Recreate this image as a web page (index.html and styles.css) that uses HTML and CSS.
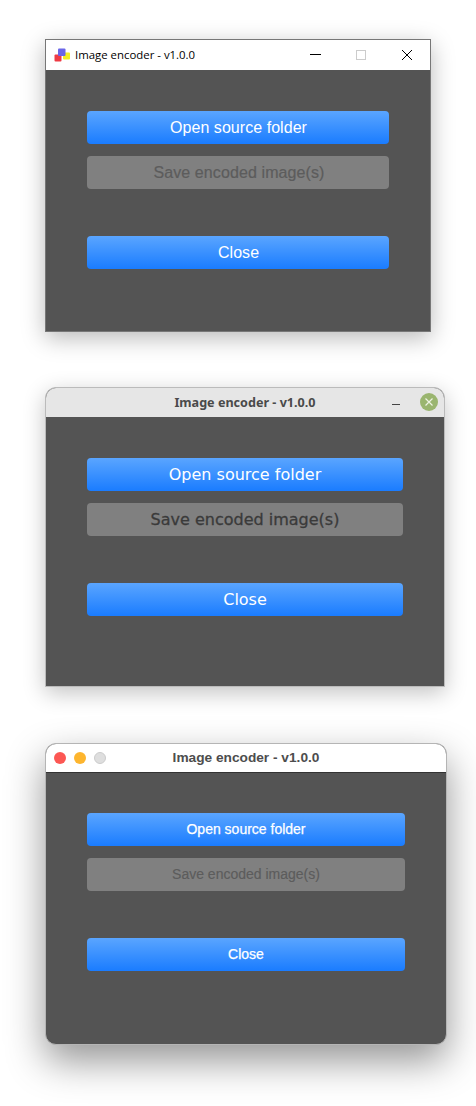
FILE: index.html
```html
<!DOCTYPE html>
<html lang="en">
<head>
  <meta charset="UTF-8">
  <title>Image encoder</title>
  <link rel="stylesheet" href="styles.css">
</head>
<body>

<div class="window win">
  <div class="titlebar">
    <svg class="app-icon" width="16" height="14" viewBox="0 0 16 14">
      <rect x="0.5" y="6.5" width="7" height="7" rx="1" fill="#ee3a44"/>
      <rect x="9" y="4.5" width="7" height="7" rx="1" fill="#f2ee22"/>
      <rect x="4" y="0.5" width="7.5" height="7.5" rx="1" fill="#6a66e8"/>
    </svg>
    <div class="title">Image encoder - v1.0.0</div>
    <div class="controls">
      <svg width="12" height="12" viewBox="0 0 12 12"><path d="M1 5.5h11" stroke="#000" fill="none"/></svg>
      <svg width="12" height="12" viewBox="0 0 12 12"><rect x="1.5" y="1.5" width="9" height="9" stroke="#ccc" fill="none"/></svg>
      <svg width="12" height="12" viewBox="0 0 12 12"><path d="M1 1l10 10M11 1L1 11" stroke="#000" fill="none"/></svg>
    </div>
  </div>
  <div class="content">
    <button>Open source folder</button>
    <button class="disabled">Save encoded image(s)</button>
    <button class="last">Close</button>
  </div>
</div>

<div class="window linux">
  <div class="titlebar">
    <div class="title">Image encoder - v1.0.0</div>
    <div class="controls">
      <svg width="10" height="10" viewBox="0 0 10 10"><path d="M1 7.5h8" stroke="#444" fill="none"/></svg>
      <svg class="close-round" width="18" height="18" viewBox="0 0 18 18">
        <circle cx="9" cy="9" r="9" fill="#9ab56f"/>
        <path d="M5.5 5.5l7 7M12.5 5.5l-7 7" stroke="#eef3e4" stroke-width="1.2" fill="none"/>
      </svg>
    </div>
  </div>
  <div class="content">
    <button>Open source folder</button>
    <button class="disabled">Save encoded image(s)</button>
    <button class="last">Close</button>
  </div>
</div>

<div class="window mac">
  <div class="titlebar">
    <div class="lights">
      <span class="light red"></span>
      <span class="light yellow"></span>
      <span class="light grey"></span>
    </div>
    <div class="title">Image encoder - v1.0.0</div>
  </div>
  <div class="content">
    <button>Open source folder</button>
    <button class="disabled">Save encoded image(s)</button>
    <button class="last">Close</button>
  </div>
</div>

</body>
</html>
```

FILE: styles.css
```css
html, body {
  margin: 0;
  padding: 0;
  background: #fff;
  overflow: hidden;
}
body {
  width: 476px;
  height: 1106px;
  padding-top: 39px;
  box-sizing: border-box;
}

.window {
  box-sizing: border-box;
  background: #545454;
  display: flex;
  flex-direction: column;
}
.titlebar {
  display: flex;
  align-items: center;
  position: relative;
  box-sizing: border-box;
}
.content {
  flex: 1;
  display: flex;
  flex-direction: column;
  padding: 41px 41px 0;
}

button {
  height: 33px;
  padding: 0;
  border: none;
  border-radius: 4px;
  margin-bottom: 12px;
  color: #fff;
  background: linear-gradient(#5aa5ff, #1a7cff);
  font-family: "Liberation Sans", Arial, sans-serif;
  font-size: 16px;
}
button.disabled {
  background: #808080;
  color: #5c5c5c;
}
button.last { margin-top: 35px; margin-bottom: 0; }

/* windows */
.win {
  width: 386px;
  height: 293px;
  margin-left: 45px;
  border: 1px solid #777;
  box-shadow: 0 6px 22px rgba(0, 0, 0, 0.28);
}
.win .titlebar {
  height: 30px;
  background: #fff;
  padding-left: 8px;
}
.win .title {
  margin-left: 5px;
  padding-bottom: 2px;
  font: 11.4px "Open Sans", sans-serif;
  color: #000;
}
.win .app-icon { flex: none; }
.win .controls {
  margin-left: auto;
  margin-right: 17px;
  display: flex;
  gap: 34px;
}
.win .controls svg { display: block; }
.win button { letter-spacing: 0.05px; padding-left: 1px; }
.win button.disabled { letter-spacing: 0.1px; padding-left: 2px; -webkit-text-stroke: 0.2px #5c5c5c; }

/* linux */
.linux {
  width: 400px;
  height: 300px;
  margin: 55px 0 0 45px;
  border: 1px solid #bbb;
  border-radius: 11px 11px 0 0;
  box-shadow: 0 6px 22px rgba(0, 0, 0, 0.24);
}
.linux .titlebar {
  height: 29px;
  background: #e6e6e6;
  justify-content: center;
  border-radius: 10px 10px 0 0;
}
.linux .title {
  font: bold 12.6px "Noto Sans", sans-serif;
  color: #4a4a4a;
}
.linux .controls {
  position: absolute;
  right: 6px;
  top: 5px;
  display: flex;
  align-items: center;
  gap: 19px;
}
.linux .controls svg { display: block; }
.linux button { font-family: "DejaVu Sans", sans-serif; }
.linux button.disabled { color: #3a3a3a; -webkit-text-stroke: 0.3px #3a3a3a; }

/* mac */
.mac {
  width: 402px;
  height: 302px;
  margin: 56px 0 0 45px;
  border: 1px solid #b5b5b5;
  border-radius: 11px;
  box-shadow: 0 16px 38px rgba(0, 0, 0, 0.42);
}
.mac .titlebar {
  height: 29px;
  background: #fff;
  justify-content: center;
  border-bottom: 1px solid #333;
  border-radius: 10px 10px 0 0;
}
.mac .title {
  padding-bottom: 1px;
  font: bold 13.7px "Liberation Sans", sans-serif;
  color: #4d4d4d;
}
.mac .lights {
  position: absolute;
  left: 8px;
  top: 8px;
  display: flex;
  gap: 8px;
}
.light {
  display: block;
  width: 12px;
  height: 12px;
  border-radius: 50%;
}
.red { background: #fc5753; }
.yellow { background: #fdb52e; }
.grey { background: #dedede; border: 1px solid #ccc; box-sizing: border-box; }
.mac .content { padding-top: 40px; }
.mac button { font-size: 14px; padding-bottom: 2px; -webkit-text-stroke: 0.25px #fff; }
.mac button.disabled { -webkit-text-stroke: 0.15px #5c5c5c; }
```
